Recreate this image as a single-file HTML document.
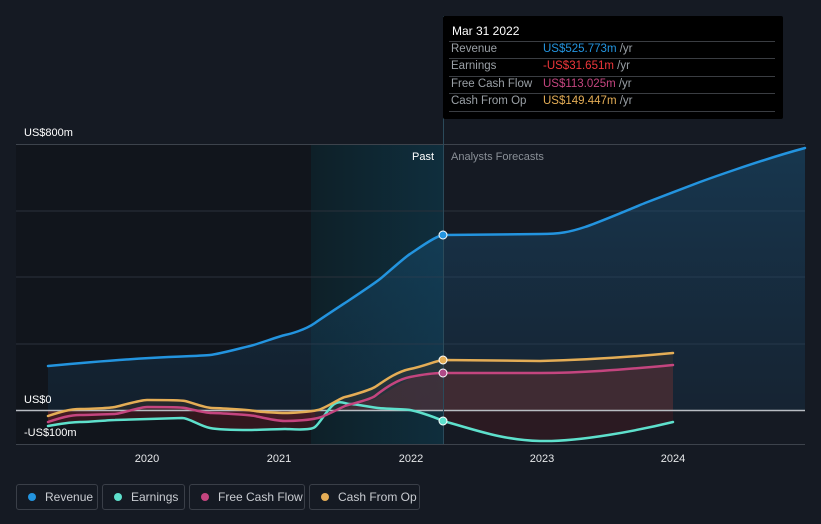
<!DOCTYPE html>
<html><head><meta charset="utf-8"><style>
body{margin:0;background:#151a23;width:821px;height:524px;overflow:hidden;font-family:"Liberation Sans",sans-serif}
.tt{position:absolute;left:443px;top:16px;width:340px;height:103px;background:#000;border-radius:2px}
.tt .h{position:absolute;left:9px;top:8px;color:#fff;font-size:12px}
.row{position:absolute;left:6px;width:326px;border-top:1px solid #3a3d42;height:17px;font-size:11.5px;color:#9aa0a6}
.row span.l{position:absolute;left:2px;top:1px}
.row span.v{position:absolute;left:94px;top:1px}
.leg{position:absolute;top:484px;height:26px;border:1px solid #3a3f48;border-radius:3px;color:#c9ccd1;font-size:12px;box-sizing:border-box}
.leg i{position:absolute;left:11px;top:8px;width:8px;height:8px;border-radius:50%}
.leg b{position:absolute;left:28px;top:5px;font-weight:normal}
</style></head><body>
<svg width="821" height="524" style="position:absolute;left:0;top:0">
<defs>
<linearGradient id="pg" x1="0" x2="1"><stop offset="0" stop-color="#0e2028"/><stop offset="1" stop-color="#0f2e3d"/></linearGradient>
<linearGradient id="rf" x1="0" y1="0" x2="0" y2="1"><stop offset="0" stop-color="#1a5a84" stop-opacity=".45"/><stop offset="1" stop-color="#1a4a70" stop-opacity=".2"/></linearGradient>
</defs>
<rect x="16" y="144" width="295" height="300" fill="#11151c"/>
<rect x="311" y="144" width="132" height="300" fill="url(#pg)"/>
<g stroke="#2a313b" stroke-width="1">
<line x1="16" x2="805" y1="211" y2="211"/><line x1="16" x2="805" y1="277" y2="277"/><line x1="16" x2="805" y1="344" y2="344"/>
</g>
<line x1="16" x2="805" y1="144.5" y2="144.5" stroke="#3d434c"/>
<line x1="16" x2="805" y1="444.5" y2="444.5" stroke="#3d434c"/>
<path d="M48,366 C80,363 115,360 150,358 S200,356 210,355 S245,347 250,346 S280,336 285,335 S305,330 315,323 S345,303 348,301 S375,283 380,279 S405,257 410,254 S435,236 443,235 L540,234 C560,234 570,232 585,227 S640,205 645,203 S700,182 700,182 S760,160 805,148 L805,411 L48,411Z" fill="url(#rf)"/>
<path d="M48,416 C60,412 70,409 80,409 S110,408 115,407 S140,400 147,400 S180,400 185,401 S205,408 212,408 S250,410 255,411 S280,413 285,413 S310,412 318,410 S340,398 345,397 S370,390 375,387 S395,372 410,369 S435,361 443,360 L540,361 C580,360 620,358 673,353 L673,411 L48,411Z" fill="#4a3a2a" opacity=".35"/>
<path d="M48,422 L80,415 115,414 147,407 180,407 210,413 250,415 280,421 315,420 345,408 375,399 410,378 443,373 540,373 673,365 673,411 48,411Z" fill="#6a2a3a" opacity=".35"/>
<path d="M48,426 L80,422 115,420 180,418 210,428 245,430 280,429 315,429 L315,411 48,411Z" fill="#5a1a22" opacity=".45"/>
<path d="M443,421 C470,428 500,440 540,441 S640,430 673,422 L673,411 443,411Z" fill="#3a1a22" opacity=".6"/>
<line x1="16" x2="805" y1="410.5" y2="410.5" stroke="#b8bcc2" stroke-width="1.5"/>
<line x1="443.5" x2="443.5" y1="16" y2="444" stroke="#2b4a5a"/>
<g fill="none" stroke-width="2.5" stroke-linecap="round">
<path d="M48,366 C80,363 115,360 150,358 S200,356 210,355 S245,347 250,346 S280,336 285,335 S305,330 315,323 S345,303 348,301 S375,283 380,279 S405,257 410,254 S435,236 443,235 L540,234 C560,234 570,232 585,227 S640,205 645,203 S700,182 700,182 S760,160 805,148" stroke="#2394df"/>
<path d="M48,426 C60,424 70,422 80,422 S110,420 115,420 S175,418 182,418 S200,426 210,428 S245,430 250,430 S280,429 285,429 S310,431 315,427 S325,413 332,406 S345,404 350,404 S370,407 378,408 S405,409 410,410 S430,415 443,421 C470,428 500,440 540,441 S640,430 673,422" stroke="#5ee0cc"/>
<path d="M48,422 C60,418 70,415 80,415 S110,414 115,414 S140,407 147,407 S180,407 185,408 S205,413 212,413 S250,415 255,416 S275,421 285,421 S310,420 318,418 S340,408 345,406 S370,400 375,396 S395,380 410,377 S435,373 443,373 L540,373 C580,373 620,370 673,365" stroke="#c4457f"/>
<path d="M48,416 C60,412 70,409 80,409 S110,408 115,407 S140,400 147,400 S180,400 185,401 S205,408 212,408 S250,410 255,411 S280,413 285,413 S310,412 318,410 S340,398 345,397 S370,390 375,387 S395,372 410,369 S435,361 443,360 L540,361 C580,360 620,358 673,353" stroke="#e4ad56"/>
</g>
<g stroke="#fff" stroke-width="1">
<circle cx="443" cy="235" r="4" fill="#2394df"/><circle cx="443" cy="360" r="4" fill="#e4ad56"/><circle cx="443" cy="373" r="4" fill="#b04a88"/><circle cx="443" cy="421" r="4" fill="#5ee0cc"/>
</g>
<g font-size="11" fill="#fff">
<text x="24" y="136">US$800m</text><text x="24" y="403">US$0</text><text x="24" y="436">-US$100m</text>
<text x="412" y="160">Past</text><text x="451" y="160" fill="#8a9097">Analysts Forecasts</text>
<g text-anchor="middle" fill="#e6e8ea"><text x="147" y="462">2020</text><text x="279" y="462">2021</text><text x="411" y="462">2022</text><text x="542" y="462">2023</text><text x="673" y="462">2024</text></g>
</g>
</svg>
<div class="tt"><div class="h">Mar 31 2022</div>
<div class="row" style="top:25px"><span class="l">Revenue</span><span class="v"><span style="color:#2394df">US$525.773m</span> /yr</span></div>
<div class="row" style="top:42px"><span class="l">Earnings</span><span class="v"><span style="color:#f0373b">-US$31.651m</span> /yr</span></div>
<div class="row" style="top:60px"><span class="l">Free Cash Flow</span><span class="v"><span style="color:#c4457f">US$113.025m</span> /yr</span></div>
<div class="row" style="top:77px"><span class="l">Cash From Op</span><span class="v"><span style="color:#e4ad56">US$149.447m</span> /yr</span></div>
<div class="row" style="top:95px;height:0"></div>
</div>
<div class="leg" style="left:16px;width:82px"><i style="background:#2394df"></i><b>Revenue</b></div>
<div class="leg" style="left:102px;width:83px"><i style="background:#5ee0cc"></i><b>Earnings</b></div>
<div class="leg" style="left:189px;width:116px"><i style="background:#c4457f"></i><b>Free Cash Flow</b></div>
<div class="leg" style="left:309px;width:111px"><i style="background:#e4ad56"></i><b>Cash From Op</b></div>
</body></html>
